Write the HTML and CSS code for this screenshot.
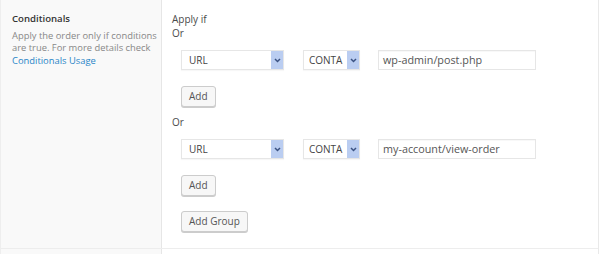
FILE: index.html
```html
<!DOCTYPE html>
<html>
<head>
<meta charset="utf-8">
<link rel="stylesheet" href="styles.css">
</head>
<body>
<div class="table">
  <div class="row">
    <div class="th">
      <div class="title">Conditionals</div>
      <p class="desc">Apply the order only if conditions are true. For more details check <a href="#" class="link">Conditionals Usage</a></p>
    </div>
    <div class="td">
      <div class="label">Apply if</div>
      <div class="label">Or</div>
      <div class="group">
        <div class="cond">
          <div class="select wide"><span class="val">URL</span><span class="arrow"><svg width="7" height="5" viewBox="0 0 7 5"><path d="M1 1 L3.5 3.5 L6 1" fill="none" stroke="#3b5282" stroke-width="1.5"/></svg></span></div>
          <div class="select narrow"><span class="val">CONTA</span><span class="arrow"><svg width="7" height="5" viewBox="0 0 7 5"><path d="M1 1 L3.5 3.5 L6 1" fill="none" stroke="#3b5282" stroke-width="1.5"/></svg></span></div>
          <div class="input">wp-admin/post.php</div>
        </div>
        <button class="btn add">Add</button>
      </div>
      <div class="label or2">Or</div>
      <div class="group">
        <div class="cond">
          <div class="select wide"><span class="val">URL</span><span class="arrow"><svg width="7" height="5" viewBox="0 0 7 5"><path d="M1 1 L3.5 3.5 L6 1" fill="none" stroke="#3b5282" stroke-width="1.5"/></svg></span></div>
          <div class="select narrow"><span class="val">CONTA</span><span class="arrow"><svg width="7" height="5" viewBox="0 0 7 5"><path d="M1 1 L3.5 3.5 L6 1" fill="none" stroke="#3b5282" stroke-width="1.5"/></svg></span></div>
          <div class="input">my-account/view-order</div>
        </div>
        <button class="btn add">Add</button>
        <button class="btn addgroup">Add Group</button>
      </div>
    </div>
  </div>
  <div class="row next">
    <div class="th"></div>
    <div class="td"></div>
  </div>
</div>
</body>
</html>
```
FILE: styles.css
```css
html, body {
  margin: 0;
  padding: 0;
  background: #ffffff;
}
body {
  font-family: "Open Sans", "Liberation Sans", sans-serif;
  color: #444;
  font-size: 10px;
}
.table {
  width: 599px;
  border-right: 1px solid #e9e9e9;
  border-left: 1px solid #eeeeee;
  box-sizing: border-box;
}
.row {
  display: grid;
  grid-template-columns: 161px 1fr;
  border-bottom: 1px solid #ededed;
}
.th {
  background: #f9f9f9;
  border-right: 1px solid #e6e6e6;
  padding: 12px 4px 0 11px;
}
.title {
  font-weight: 600;
  font-size: 9.6px;
  color: #333;
  line-height: 14px;
}
.desc {
  margin: 4px 0 0;
  font-size: 9.4px;
  line-height: 12.3px;
  color: #888;
}
.link {
  color: #2a86c8;
  text-decoration: none;
}
.td {
  padding: 12px 10px 16px 10px;
}
.label {
  line-height: 14px;
  color: #4a4a4a;
  font-size: 10px;
}
.or2 {
  margin-top: 8px;
}
.group {
  padding-left: 9px;
  display: flex;
  flex-direction: column;
  align-items: flex-start;
}
.cond {
  display: flex;
  align-items: center;
  margin-top: 10px;
  height: 20px;
}
.select {
  display: flex;
  height: 20px;
  box-sizing: border-box;
  border: 1px solid #e6e6e6;
  background: #fff;
  box-shadow: 0 1px 1px rgba(0,0,0,0.03);
}
.select .val {
  flex: 1;
  line-height: 18px;
  padding-left: 7px;
  color: #444;
  font-size: 10px;
  overflow: hidden;
}
.select .arrow {
  width: 12px;
  background: #bacdf1;
  display: flex;
  align-items: center;
  justify-content: center;
}
.wide {
  width: 103px;
}
.narrow {
  width: 57px;
  margin-left: 19px;
}
.narrow .val {
  padding-left: 5px;
}
.input {
  margin-left: 18px;
  width: 158px;
  height: 20px;
  box-sizing: border-box;
  border: 1px solid #e6e6e6;
  line-height: 18px;
  padding-left: 4px;
  color: #555;
  font-size: 10.8px;
  box-shadow: inset 0 1px 1px rgba(0,0,0,0.03);
}
.btn {
  font-family: "Open Sans", "Liberation Sans", sans-serif;
  font-size: 10px;
  color: #555;
  background: #f7f7f7;
  border: 1px solid #cccccc;
  border-radius: 3px;
  box-shadow: 0 1px 0 #cccccc;
  height: 21px;
  padding: 0 7px;
  margin: 0;
  line-height: 19px;
}
.add {
  margin-top: 16px;
}
.addgroup {
  margin-top: 15px;
}
.next .th, .next .td {
  height: 6px;
  padding: 0;
}
```
